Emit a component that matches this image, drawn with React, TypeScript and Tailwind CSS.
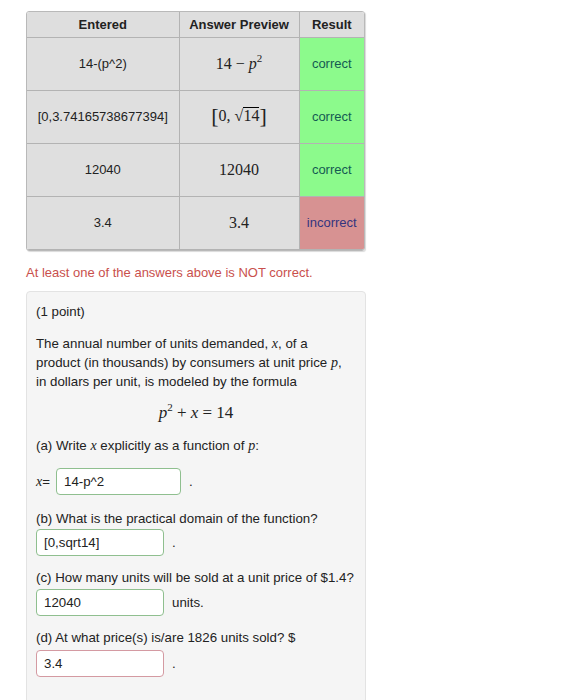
import React from "react"

type Row = { entered: string; preview: React.ReactNode; ok: boolean }

const serif = "font-['Liberation_Serif','Times_New_Roman',serif]"

function V({ children }: { children: React.ReactNode }) {
  return <span className={`${serif} italic text-[14px]`}>{children}</span>
}

function Sq() {
  return <sup className="text-[11px] -top-[7px] not-italic">2</sup>
}

const rows: Row[] = [
  {
    entered: "14-(p^2)",
    preview: (
      <span>
        14 − <i>p</i>
        <Sq />
      </span>
    ),
    ok: true,
  },
  {
    entered: "[0,3.74165738677394]",
    preview: (
      <span className="inline-flex items-center">
        <span className="text-[22px] leading-none">[</span>
        <span>0,&nbsp;</span>
        <span>√</span>
        <span className="border-t border-black leading-[16px]">14</span>
        <span className="text-[22px] leading-none">]</span>
      </span>
    ),
    ok: true,
  },
  { entered: "12040", preview: "12040", ok: true },
  { entered: "3.4", preview: "3.4", ok: false },
]

function Field({ value, ok, w = "w-[128px]" }: { value: string; ok: boolean; w?: string }) {
  return (
    <div
      className={`${w} h-[27px] shrink-0 rounded-[4px] border bg-white px-[7px] flex items-center text-[13.3px] text-[#222] ${
        ok ? "border-[#8fbf8f]" : "border-[#d49aa2]"
      }`}
    >
      {value}
    </div>
  )
}

export default function App() {
  return (
    <div className="w-[585px] h-[700px] bg-white font-['Liberation_Sans',Arial,sans-serif] text-[13px] text-[#222] pl-[26px] pt-[11px] overflow-hidden">
      {/* ── results table ── */}
      <div className="w-[339px] rounded-[3px] border border-[#b9b9b9] overflow-hidden shadow-[1px_1px_1px_rgba(0,0,0,0.15)]">
        <table className="w-full border-collapse table-fixed">
          <colgroup>
            <col className="w-[152px]" />
            <col className="w-[120px]" />
            <col />
          </colgroup>
          <thead>
            <tr className="h-[25px] bg-[#dedede]">
              <th className="font-bold border-r border-b border-[#b3b3b3]">Entered</th>
              <th className="font-bold border-r border-b border-[#b3b3b3]">Answer Preview</th>
              <th className="font-bold border-b border-[#b3b3b3]">Result</th>
            </tr>
          </thead>
          <tbody>
            {rows.map((r, i) => (
              <tr key={i} className="h-[53px]">
                <td className="text-center bg-[#dfdfdf] border-r border-b border-[#b3b3b3]">{r.entered}</td>
                <td className={`text-center bg-[#dfdfdf] border-r border-b border-[#b3b3b3] text-[16px] ${serif}`}>
                  {r.preview}
                </td>
                <td
                  className={`text-center border-b border-[#b3b3b3] ${
                    r.ok ? "bg-[#8cfa8c] text-[#145a52]" : "bg-[#d79292] text-[#34357f]"
                  }`}
                >
                  {r.ok ? "correct" : "incorrect"}
                </td>
              </tr>
            ))}
          </tbody>
        </table>
      </div>

      <p className="mt-[12px] leading-[19px] text-[#c9504d]">At least one of the answers above is NOT correct.</p>

      {/* ── problem ── */}
      <div className="mt-[9px] w-[340px] h-[420px] rounded-[4px] border border-[#e3e3e3] bg-[#f5f5f5] px-[9px] pt-[10px] text-[13.3px] leading-[19px]">
        <p>(1 point)</p>
        <p className="mt-[13px] max-w-[314px]">
          The annual number of units demanded, <V>x</V>, of a product (in thousands) by consumers at unit price <V>p</V>,
          in dollars per unit, is modeled by the formula
        </p>
        <p className={`mt-[11px] text-center text-[17px] leading-[22px] ${serif}`}>
          <i>p</i>
          <Sq /> + <i>x</i> = 14
        </p>
        <p className="mt-[12px]">
          (a) Write <V>x</V> explicitly as a function of <V>p</V>:
        </p>
        <div className="mt-[13px] flex items-center">
          <span className="w-[20px]">
            <V>x</V>=
          </span>
          <Field value="14-p^2" ok w="w-[125px]" />
          <span className="ml-[8px]">.</span>
        </div>
        <p className="mt-[14px]">(b) What is the practical domain of the function?</p>
        <div className="mt-[1px] flex items-center">
          <Field value="[0,sqrt14]" ok />
          <span className="ml-[8px]">.</span>
        </div>
        <p className="mt-[12px]">(c) How many units will be sold at a unit price of $1.4?</p>
        <div className="mt-[2px] flex items-center">
          <Field value="12040" ok />
          <span className="ml-[8px]">units.</span>
        </div>
        <p className="mt-[12px]">(d) At what price(s) is/are 1826 units sold? $</p>
        <div className="mt-[3px] flex items-center">
          <Field value="3.4" ok={false} />
          <span className="ml-[8px]">.</span>
        </div>
      </div>
    </div>
  )
}
